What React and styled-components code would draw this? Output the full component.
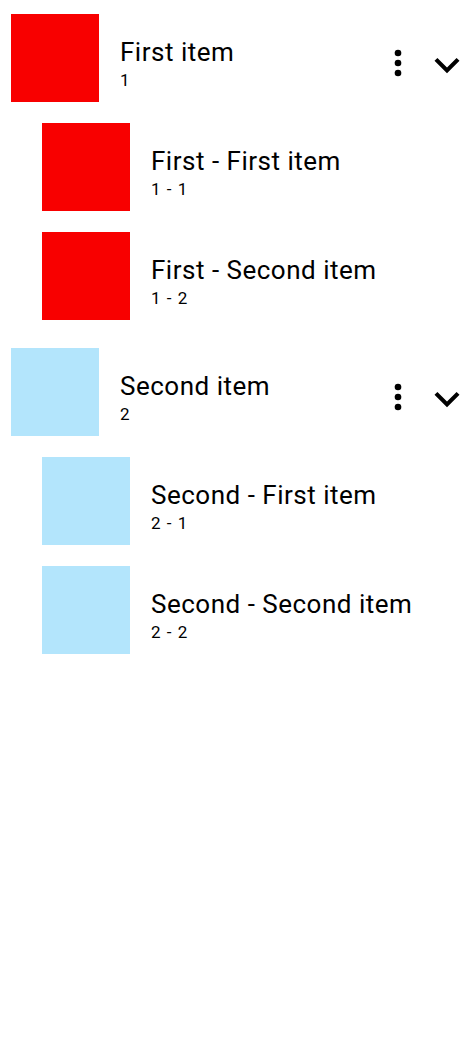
import React from "react";
import styled, { createGlobalStyle } from "styled-components";

const GlobalStyle = createGlobalStyle`
  body {
    margin: 0;
    background: #fff;
    font-family: Roboto, "Noto Sans", sans-serif;
    color: #000;
  }
`;

const groups = [
  {
    color: "#f80000",
    title: "First item",
    sub: "1",
    children: [
      { title: "First - First item", sub: "1 - 1" },
      { title: "First - Second item", sub: "1 - 2" },
    ],
  },
  {
    color: "#b3e5fc",
    title: "Second item",
    sub: "2",
    children: [
      { title: "Second - First item", sub: "2 - 1" },
      { title: "Second - Second item", sub: "2 - 2" },
    ],
  },
];

const List = styled.div`
  display: flex;
  flex-direction: column;
  padding-top: 3px;
`;

const Group = styled.section`
  display: flex;
  flex-direction: column;
  padding-bottom: 7px;
`;

const Row = styled.div`
  display: flex;
  align-items: flex-start;
  padding: 11px 0 10px ${(p) => (p.$nested ? 42 : 11)}px;
`;

const Thumb = styled.div`
  width: 88px;
  height: 88px;
  flex-shrink: 0;
  background: ${(p) => p.$color};
`;

const Text = styled.div`
  flex: 1;
  margin-left: 21px;
  padding-top: 23px;
`;

const Title = styled.div`
  font-size: 26px;
  line-height: 30px;
  letter-spacing: 0.5px;
`;

const Sub = styled.div`
  font-size: 17px;
  line-height: 20px;
  letter-spacing: 1px;
  margin-top: 3px;
`;

const Actions = styled.div`
  display: flex;
  align-items: flex-start;
  gap: 4px;
  padding: 26px 2px 0 0;
`;

const Kebab = styled.svg`
  width: 40px;
  height: 40px;
  margin-top: 3px;
`;

const Chevron = styled.svg`
  width: 50px;
  height: 50px;
`;

const Item = ({ color, title, sub, nested }) => (
  <Row $nested={nested}>
    <Thumb $color={color} />
    <Text>
      <Title>{title}</Title>
      <Sub>{sub}</Sub>
    </Text>
    {!nested && (
      <Actions>
        <Kebab viewBox="0 0 24 24">
          <circle cx="12" cy="6" r="2" />
          <circle cx="12" cy="12" r="2" />
          <circle cx="12" cy="18" r="2" />
        </Kebab>
        <Chevron viewBox="0 0 24 24">
          <path d="M16.59 8.59L12 13.17 7.41 8.59 6 10l6 6 6-6z" />
        </Chevron>
      </Actions>
    )}
  </Row>
);

const App = () => (
  <>
    <GlobalStyle />
    <List>
      {groups.map((g) => (
        <Group key={g.sub}>
          <Item color={g.color} title={g.title} sub={g.sub} />
          {g.children.map((c) => (
            <Item key={c.sub} nested color={g.color} title={c.title} sub={c.sub} />
          ))}
        </Group>
      ))}
    </List>
  </>
);

export default App;
